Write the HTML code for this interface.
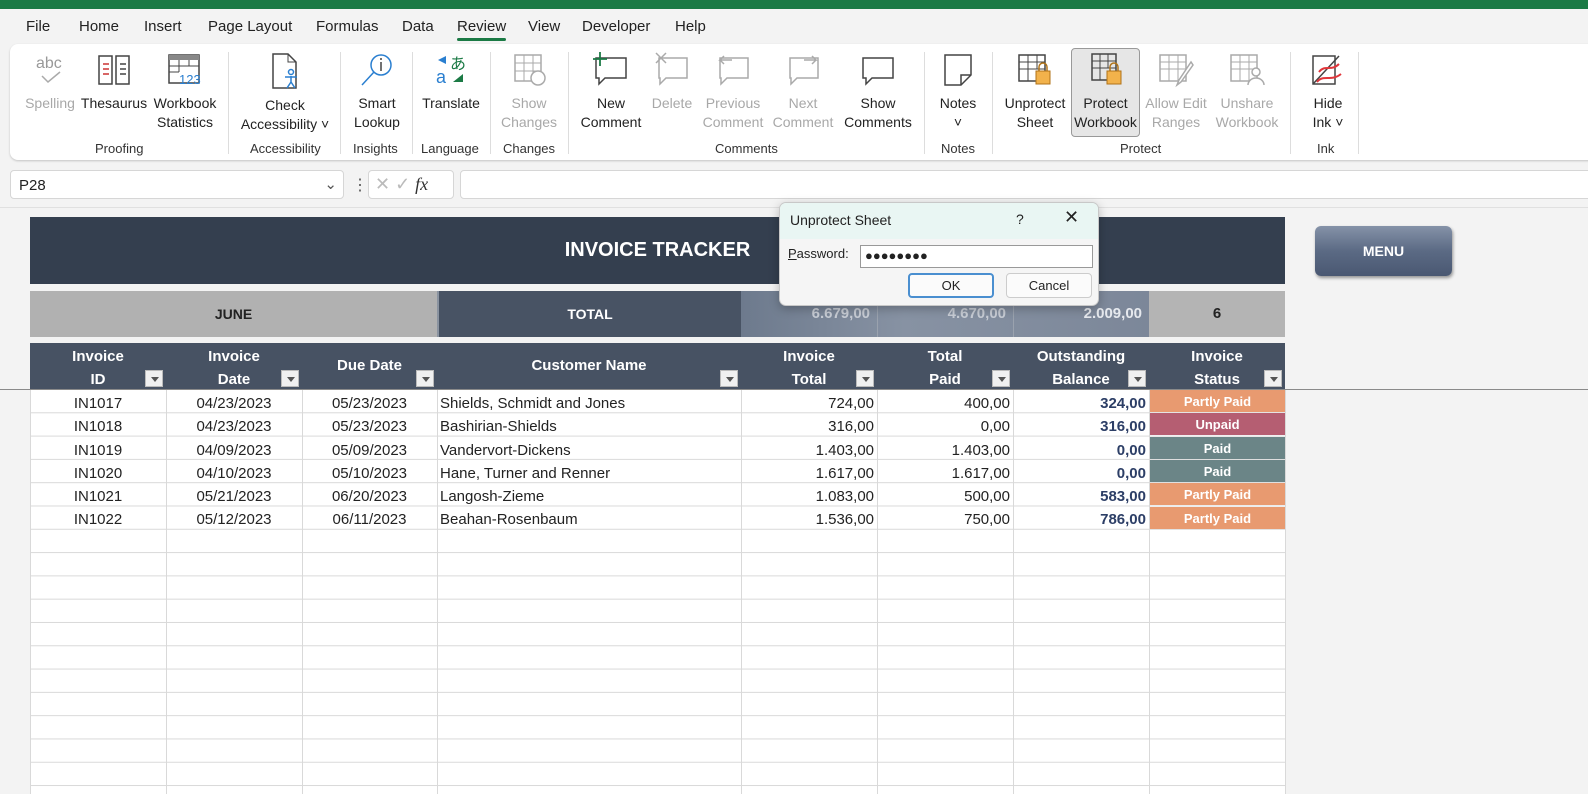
<!DOCTYPE html>
<html><head><meta charset="utf-8"><style>
*{margin:0;padding:0;box-sizing:border-box}
body{width:1588px;height:794px;overflow:hidden;background:#f3f3f3;font-family:"Liberation Sans",sans-serif;position:relative;color:#222}
.abs{position:absolute}
.tab{position:absolute;top:18px;font-size:15px;color:#222}
.rib{position:absolute;left:10px;top:44px;width:1590px;height:116px;background:#fff;border-radius:8px;box-shadow:0 1px 2px rgba(0,0,0,.2)}
.btn{position:absolute;top:52px;text-align:center;font-size:14px;line-height:19px;color:#222}
.btn.dis{color:#a8a8a8}
.btn svg{display:block;margin:0 auto 6px}
.grp{position:absolute;top:141px;font-size:13px;color:#333;text-align:center}
.sep{position:absolute;top:52px;width:1px;height:102px;background:#ddd}
.cell{position:absolute;font-size:15px;white-space:nowrap}
.hdr{position:absolute;top:343px;height:46px;color:#fff;font-weight:bold;font-size:15px;text-align:center;line-height:23px;padding-top:2px}
.dd{position:absolute;width:18px;height:17px;background:#f0f0f0;border:1px solid #bbb;bottom:2px;right:3px}
.dd:after{content:"";position:absolute;left:5px;top:6px;border-left:4px solid transparent;border-right:4px solid transparent;border-top:5px solid #555}
.st{position:absolute;left:1150px;width:135px;height:22px;color:#fff;font-weight:bold;font-size:13px;text-align:center;line-height:23px}
</style></head><body>
<div class="abs" style="left:0;top:0;width:1588px;height:9px;background:#1b7a45"></div>
<div class="tab" style="left:26px">File</div>
<div class="tab" style="left:79px">Home</div>
<div class="tab" style="left:144px">Insert</div>
<div class="tab" style="left:208px">Page Layout</div>
<div class="tab" style="left:316px">Formulas</div>
<div class="tab" style="left:402px">Data</div>
<div class="tab" style="left:457px;font-weight:normal">Review</div>
<div class="abs" style="left:457px;top:38px;width:49px;height:3px;background:#1b7a45;border-radius:2px"></div>
<div class="tab" style="left:528px">View</div>
<div class="tab" style="left:582px">Developer</div>
<div class="tab" style="left:675px">Help</div>

<div class="rib"></div>
<div class="btn dis" style="left:22px;width:56px"><svg width="36" height="36"><text x="4" y="16" font-size="16" fill="#999" font-family="Liberation Sans">abc</text><path d="M10 24l6 6 12-10" stroke="#aaa" fill="none" stroke-width="1.5"/></svg>Spelling</div>
<div class="btn" style="left:80px;width:68px"><svg width="36" height="36"><path d="M3 4h13v28H3zM20 4h13v28H20z" fill="none" stroke="#444" stroke-width="1.5"/><path d="M7 12h6M7 17h6M7 22h6" stroke="#c33" stroke-width="1.5"/><path d="M24 12h6M24 17h6M24 22h6" stroke="#444" stroke-width="1.5"/></svg>Thesaurus</div>
<div class="btn" style="left:150px;width:70px"><svg width="36" height="36"><rect x="2" y="3" width="30" height="28" fill="none" stroke="#444" stroke-width="1.5"/><rect x="2" y="3" width="30" height="5" fill="#888"/><path d="M2 14h30M2 20h10M12 8v12M22 8v6" stroke="#444"/><text x="12" y="32" font-size="13" fill="#2a7fd0" font-family="Liberation Sans">123</text></svg>Workbook<br>Statistics</div>
<div class="grp" style="left:95px">Proofing</div>
<div class="sep" style="left:228px"></div>
<div class="btn" style="left:236px;width:98px"><svg width="36" height="38"><path d="M6 2h15l8 8v26H6z" fill="#fff" stroke="#444" stroke-width="1.5"/><path d="M21 2v8h8" fill="none" stroke="#444"/><circle cx="24" cy="20" r="2.5" fill="none" stroke="#2a7fd0" stroke-width="1.5"/><path d="M18 25h12M24 24v6l-4 6M24 30l4 6" stroke="#2a7fd0" stroke-width="1.5" fill="none"/></svg>Check<br>Accessibility ˅</div>
<div class="grp" style="left:250px">Accessibility</div>
<div class="sep" style="left:340px"></div>
<div class="btn" style="left:348px;width:58px"><svg width="36" height="36"><circle cx="22" cy="13" r="10" fill="none" stroke="#2a7fd0" stroke-width="1.5"/><path d="M15 20L3 33" stroke="#2a7fd0" stroke-width="1.5"/><path d="M22 10v9" stroke="#444" stroke-width="1.5"/><circle cx="22" cy="7" r="1" fill="#444"/></svg>Smart<br>Lookup</div>
<div class="grp" style="left:353px">Insights</div>
<div class="sep" style="left:412px"></div>
<div class="btn" style="left:418px;width:66px"><svg width="36" height="36"><path d="M5 8l8-4v8z" fill="#2a7fd0"/><text x="3" y="31" font-size="18" fill="#2a7fd0" font-family="Liberation Sans">a</text><text x="17" y="17" font-size="16" fill="#1b7a45" font-family="Noto Sans CJK JP">あ</text><path d="M20 30l10-8v8z" fill="#1b7a45"/></svg>Translate</div>
<div class="grp" style="left:421px">Language</div>
<div class="sep" style="left:490px"></div>
<div class="btn dis" style="left:496px;width:66px"><svg width="36" height="36"><rect x="4" y="3" width="26" height="26" fill="none" stroke="#aaa" stroke-width="1.5"/><path d="M4 11h26M4 19h26M13 3v26M22 3v26" stroke="#aaa"/><circle cx="27" cy="26" r="7" fill="#fff" stroke="#aaa" stroke-width="1.5"/></svg>Show<br>Changes</div>
<div class="grp" style="left:503px">Changes</div>
<div class="sep" style="left:568px"></div>
<div class="btn" style="left:576px;width:70px"><svg width="38" height="36"><path d="M4 6h30v20H13l-6 6v-6H4z" fill="none" stroke="#444" stroke-width="1.5"/><path d="M8 0v14M1 7h14" stroke="#1b7a45" stroke-width="1.8"/></svg>New<br>Comment</div>
<div class="btn dis" style="left:646px;width:52px"><svg width="38" height="36"><path d="M6 6h28v20H13l-6 6v-6H6z" fill="none" stroke="#aaa" stroke-width="1.5"/><path d="M3 1l10 10M13 1L3 11" stroke="#aaa" stroke-width="1.5"/></svg>Delete</div>
<div class="btn dis" style="left:700px;width:66px"><svg width="38" height="36"><path d="M6 6h28v20H13l-6 6v-6H6z" fill="none" stroke="#aaa" stroke-width="1.5"/><path d="M18 8H6l4-4M6 8l4 4" stroke="#aaa" stroke-width="1.5" fill="none"/></svg>Previous<br>Comment</div>
<div class="btn dis" style="left:770px;width:66px"><svg width="38" height="36"><path d="M6 6h28v20H13l-6 6v-6H6z" fill="none" stroke="#aaa" stroke-width="1.5"/><path d="M20 8h12l-4-4M32 8l-4 4" stroke="#aaa" stroke-width="1.5" fill="none"/></svg>Next<br>Comment</div>
<div class="btn" style="left:840px;width:76px"><svg width="38" height="36"><path d="M4 6h30v20H13l-6 6v-6H4z" fill="none" stroke="#444" stroke-width="1.5"/></svg>Show<br>Comments</div>
<div class="grp" style="left:715px">Comments</div>
<div class="sep" style="left:924px"></div>
<div class="btn" style="left:932px;width:52px"><svg width="36" height="36"><path d="M5 3h26v20l-10 10H5z" fill="none" stroke="#444" stroke-width="1.5"/><path d="M21 33v-10h10" fill="none" stroke="#444" stroke-width="1.5"/></svg>Notes<br>˅</div>
<div class="grp" style="left:941px">Notes</div>
<div class="sep" style="left:992px"></div>
<div class="btn" style="left:1000px;width:70px"><svg width="38" height="36"><rect x="3" y="3" width="26" height="26" fill="none" stroke="#444" stroke-width="1.5"/><path d="M3 10h26M3 17h26M12 3v26M21 3v14" stroke="#444"/><rect x="20" y="19" width="14" height="13" fill="#f2b24b" stroke="#b07318"/><path d="M23 19v-4a4 4 0 0 1 8 0v4" fill="none" stroke="#b07318" stroke-width="1.5"/></svg>Unprotect<br>Sheet</div>
<div class="abs" style="left:1071px;top:48px;width:69px;height:89px;background:#e6e6e6;border:1px solid #999;border-radius:4px"></div>
<div class="btn" style="left:1071px;width:69px"><svg width="38" height="36"><rect x="5" y="2" width="24" height="26" fill="none" stroke="#444" stroke-width="1.5"/><path d="M5 9h24M5 16h24M13 2v26M21 2v14" stroke="#444"/><rect x="20" y="19" width="14" height="13" fill="#f2b24b" stroke="#b07318"/><path d="M23 19v-4a4 4 0 0 1 8 0v4" fill="none" stroke="#b07318" stroke-width="1.5"/></svg>Protect<br>Workbook</div>
<div class="btn dis" style="left:1142px;width:68px"><svg width="38" height="36"><rect x="3" y="3" width="26" height="26" fill="none" stroke="#aaa" stroke-width="1.5"/><path d="M3 10h26M3 17h26M12 3v26M21 3v26" stroke="#aaa"/><path d="M34 10L22 28l-2 5 4-3 12-17z" fill="#fff" stroke="#aaa" stroke-width="1.5"/></svg>Allow Edit<br>Ranges</div>
<div class="btn dis" style="left:1212px;width:70px"><svg width="38" height="36"><rect x="3" y="3" width="26" height="26" fill="none" stroke="#aaa" stroke-width="1.5"/><path d="M3 10h26M3 17h26M12 3v26M21 3v26" stroke="#aaa"/><circle cx="28" cy="20" r="4" fill="#fff" stroke="#aaa" stroke-width="1.5"/><path d="M20 33a8 7 0 0 1 16 0" fill="#fff" stroke="#aaa" stroke-width="1.5"/></svg>Unshare<br>Workbook</div>
<div class="grp" style="left:1120px">Protect</div>
<div class="sep" style="left:1290px"></div>
<div class="btn" style="left:1298px;width:60px"><svg width="38" height="36"><path d="M4 4h22v28H4z" fill="none" stroke="#444" stroke-width="1.5"/><path d="M4 32L30 4" stroke="#444" stroke-width="1.5"/><path d="M10 20c6-8 12 0 20-8M8 30c6-8 14 0 24-8" stroke="#e0363b" stroke-width="2" fill="none"/></svg>Hide<br>Ink ˅</div>
<div class="grp" style="left:1317px">Ink</div>
<div class="sep" style="left:1358px"></div>

<div class="abs" style="left:10px;top:170px;width:334px;height:29px;background:#fff;border:1px solid #d6d6d6;border-radius:4px;font-size:15px;padding:6px 8px">P28<span style="position:absolute;right:6px;top:4px;color:#555">⌄</span></div>
<div class="abs" style="left:352px;top:175px;font-size:16px;color:#555">⋮</div>
<div class="abs" style="left:368px;top:170px;width:86px;height:29px;background:#fff;border:1px solid #d6d6d6;border-radius:4px;font-size:18px;color:#bbb;padding:3px 6px">✕ ✓ <i style="color:#333;font-family:'Liberation Serif',serif">fx</i></div>
<div class="abs" style="left:460px;top:170px;width:1140px;height:29px;background:#fff;border:1px solid #d6d6d6;border-radius:4px"></div>
<div class="abs" style="left:0;top:207px;width:1588px;height:1px;background:#e0e0e0"></div>

<div class="abs" style="left:30px;top:217px;width:1255px;height:67px;background:#343f4f;color:#fff;font-weight:bold;font-size:20px;text-align:center;line-height:67px">INVOICE TRACKER</div>
<div class="abs" style="left:30px;top:291px;width:407px;height:46px;background:#b1b1b1;font-weight:bold;font-size:14px;text-align:center;line-height:46px">JUNE</div>
<div class="abs" style="left:437px;top:291px;width:304px;height:46px;background:#485364;color:#fff;font-weight:bold;font-size:14px;text-align:center;line-height:46px;border-left:2px solid #8a93a0">TOTAL</div>
<div class="abs" style="left:741px;top:291px;width:408px;height:46px;background:linear-gradient(90deg,#6d7a8d,#8792a3 40%,#7c8799 100%)"></div>
<div class="abs" style="left:877px;top:291px;width:1px;height:46px;background:#9aa2ae"></div>
<div class="abs" style="left:1013px;top:291px;width:1px;height:46px;background:#9aa2ae"></div>
<div class="cell" style="left:741px;top:305px;width:129px;text-align:right;color:#c8cdd5;font-weight:bold">6.679,00</div>
<div class="cell" style="left:877px;top:305px;width:129px;text-align:right;color:#c8cdd5;font-weight:bold">4.670,00</div>
<div class="cell" style="left:1013px;top:305px;width:129px;text-align:right;color:#e6e9ee;font-weight:bold">2.009,00</div>
<div class="abs" style="left:1149px;top:291px;width:136px;height:46px;background:#b4b4b4;font-weight:bold;font-size:15px;text-align:center;line-height:46px">6</div>

<div class="abs" style="left:30px;top:343px;width:1255px;height:46px;background:#475263"></div>
<div class="hdr" style="left:30px;width:136px">Invoice<br>ID<span class="dd"></span></div>
<div class="hdr" style="left:166px;width:136px">Invoice<br>Date<span class="dd"></span></div>
<div class="hdr" style="left:302px;width:135px;line-height:46px;padding-top:0">Due Date<span class="dd"></span></div>
<div class="hdr" style="left:437px;width:304px;line-height:46px;padding-top:0">Customer Name<span class="dd"></span></div>
<div class="hdr" style="left:741px;width:136px">Invoice<br>Total<span class="dd"></span></div>
<div class="hdr" style="left:877px;width:136px">Total<br>Paid<span class="dd"></span></div>
<div class="hdr" style="left:1013px;width:136px">Outstanding<br>Balance<span class="dd"></span></div>
<div class="hdr" style="left:1149px;width:136px">Invoice<br>Status<span class="dd"></span></div>

<div class="abs" style="left:0;top:389px;width:1588px;height:1px;background:#8a8a8a"></div>
<div class="abs" style="left:30px;top:390px;width:1255px;height:404px;background:#fff;
background-image:linear-gradient(#d9d9d9 1px,transparent 1px);background-size:100% 23.3px;background-position:0 22.3px"></div>
<svg class="abs" style="left:30px;top:390px" width="1256" height="404"><g stroke="#d9d9d9"><path d="M0.5 0v404M136.5 0v404M272.5 0v404M407.5 0v404M711.5 0v404M847.5 0v404M983.5 0v404M1119.5 0v404M1255.5 0v404"/></g></svg>

<div class="st" style="top:390px;background:#e89a70">Partly Paid</div>
<div class="st" style="top:413px;background:#b55e72">Unpaid</div>
<div class="st" style="top:437px;background:#6b8587">Paid</div>
<div class="st" style="top:460px;background:#6b8587">Paid</div>
<div class="st" style="top:483px;background:#e89a70">Partly Paid</div>
<div class="st" style="top:507px;background:#e89a70">Partly Paid</div>

<div style="position:absolute;left:0;top:392px;font-size:15px;line-height:23.3px">
<div class="abs" style="left:30px;width:136px;text-align:center">IN1017<br>IN1018<br>IN1019<br>IN1020<br>IN1021<br>IN1022</div>
<div class="abs" style="left:166px;width:136px;text-align:center">04/23/2023<br>04/23/2023<br>04/09/2023<br>04/10/2023<br>05/21/2023<br>05/12/2023</div>
<div class="abs" style="left:302px;width:135px;text-align:center">05/23/2023<br>05/23/2023<br>05/09/2023<br>05/10/2023<br>06/20/2023<br>06/11/2023</div>
<div class="abs" style="left:440px;width:300px;white-space:nowrap">Shields, Schmidt and Jones<br>Bashirian-Shields<br>Vandervort-Dickens<br>Hane, Turner and Renner<br>Langosh-Zieme<br>Beahan-Rosenbaum</div>
<div class="abs" style="left:741px;width:133px;text-align:right">724,00<br>316,00<br>1.403,00<br>1.617,00<br>1.083,00<br>1.536,00</div>
<div class="abs" style="left:877px;width:133px;text-align:right">400,00<br>0,00<br>1.403,00<br>1.617,00<br>500,00<br>750,00</div>
<div class="abs" style="left:1013px;width:133px;text-align:right;font-weight:bold;color:#2c3e66">324,00<br>316,00<br>0,00<br>0,00<br>583,00<br>786,00</div>
</div>

<div class="abs" style="left:1315px;top:226px;width:137px;height:50px;border-radius:6px;background:linear-gradient(#8592a8,#5b6a84 50%,#4a5872);box-shadow:1px 2px 3px rgba(0,0,0,.4);color:#fff;font-weight:bold;font-size:14px;text-align:center;line-height:50px">MENU</div>

<div class="abs" style="left:779px;top:202px;width:320px;height:104px;background:#f5f5f5;border:1px solid #c8c8c8;border-radius:7px;box-shadow:0 3px 10px rgba(0,0,0,.25);overflow:hidden">
<div style="height:36px;background:#e9f6f3;font-size:14px;padding:9px 10px;position:relative">Unprotect Sheet<span style="position:absolute;left:236px;top:8px">?</span><span style="position:absolute;left:284px;top:4px;font-size:18px">✕</span></div>
<div class="abs" style="left:8px;top:43px;font-size:13px"><u>P</u>assword:</div>
<div class="abs" style="left:80px;top:42px;width:233px;height:23px;background:#fff;border:1px solid #999;font-size:13px;padding:2px 4px;letter-spacing:0">●●●●●●●●</div>
<div class="abs" style="left:128px;top:70px;width:86px;height:25px;background:#fbfbfb;border:2px solid #4a8fd0;border-radius:4px;font-size:13px;text-align:center;line-height:21px">OK</div>
<div class="abs" style="left:226px;top:70px;width:86px;height:25px;background:#fbfbfb;border:1px solid #ccc;border-radius:4px;font-size:13px;text-align:center;line-height:23px">Cancel</div>
</div>
</body></html>
